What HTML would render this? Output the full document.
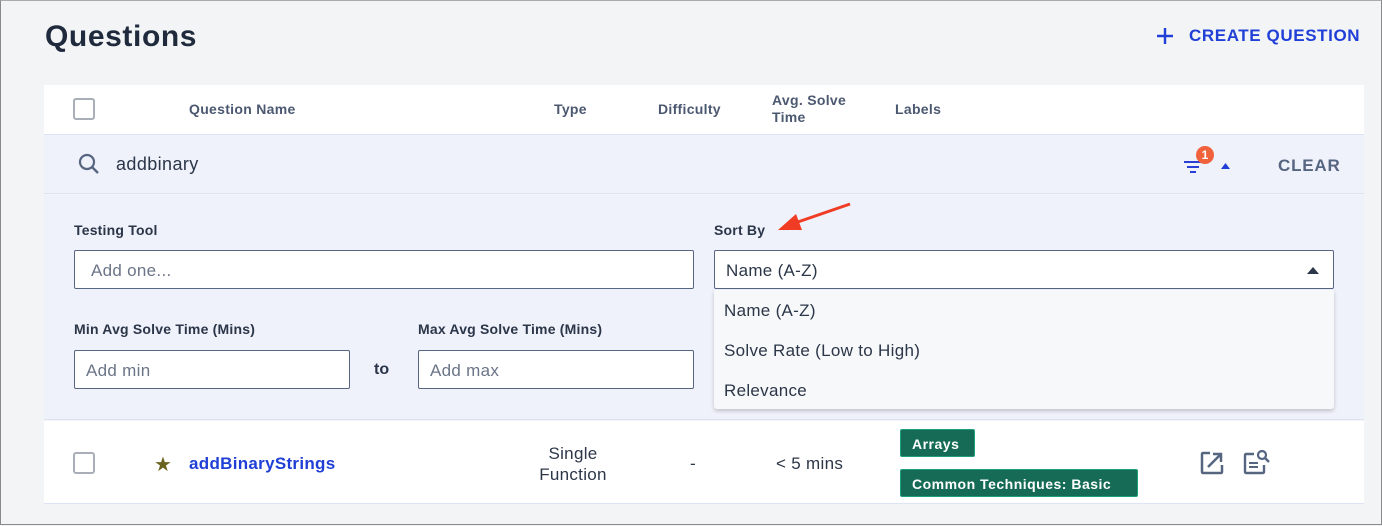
<!DOCTYPE html>
<html><head><meta charset="utf-8"><style>
*{box-sizing:border-box;margin:0;padding:0}
body{width:1382px;height:526px;background:#f3f4f6;font-family:"Liberation Sans",sans-serif;color:#2b3648;position:relative;overflow:hidden}
.frame{position:absolute;left:0;top:0;width:1382px;height:525px;border:1px solid #8a8a8a;border-top:1px solid #aaa}
.abs{position:absolute}
h1{position:absolute;left:45px;top:20px;font-size:30px;font-weight:bold;color:#1f2a3d;letter-spacing:0.6px}
.create{left:1155px;top:26px;color:#1f3fd6;font-weight:bold;font-size:17px;display:flex;align-items:center;gap:14px;letter-spacing:0.6px}
.hdr{left:44px;top:85px;width:1320px;height:50px;background:#fff;border-bottom:1px solid #dde3f3}
.th{position:absolute;font-size:14px;font-weight:bold;color:#4b5870;letter-spacing:0.3px}
.cb{position:absolute;width:22px;height:22px;border:2px solid #a9afb8;border-radius:3px;background:#fff}
.srch{left:44px;top:135px;width:1320px;height:59px;background:#eff1fb;border-bottom:1px solid #dde3f3}
.panel{left:44px;top:195px;width:1320px;height:225px;background:#eff1fb;border-bottom:1px solid #dde3f3}
.lbl{position:absolute;font-size:14px;font-weight:bold;color:#2b3648;letter-spacing:0.2px}
.inp{position:absolute;height:39px;background:#fff;border:1px solid #566580;border-radius:2px;font-size:17px;color:#6b7588;padding:10px 0 0 16px;letter-spacing:0.3px}
.row{left:44px;top:421px;width:1320px;height:83px;background:#fff;border-bottom:1px solid #dde3f3}
.tag{position:absolute;background:#156b55;border:1px solid #1fa07c;color:#fff;font-weight:bold;font-size:14px;border-radius:2px;height:28px;padding:6px 11px 0;letter-spacing:0.5px}
.dd{left:714px;top:290px;width:620px;height:119px;background:#f7f8f9;box-shadow:0 2px 4px rgba(0,0,0,.2);border-radius:0 0 3px 3px;font-size:17px;color:#2b3648;letter-spacing:0.3px}
.dd div{position:absolute;left:10px}
</style></head><body>
<h1>Questions</h1>
<div class="abs create"><svg width="20" height="20" viewBox="0 0 20 20"><path d="M10 2v16M2 10h16" stroke="#1f3fd6" stroke-width="2.4"/></svg>CREATE QUESTION</div>

<div class="abs hdr">
 <div class="cb" style="left:29px;top:13px"></div>
 <div class="th" style="left:145px;top:16px">Question Name</div>
 <div class="th" style="left:510px;top:16px">Type</div>
 <div class="th" style="left:614px;top:16px">Difficulty</div>
 <div class="th" style="left:728px;top:7px;line-height:17px">Avg. Solve<br>Time</div>
 <div class="th" style="left:851px;top:16px">Labels</div>
</div>

<div class="abs srch">
 <svg class="abs" style="left:33px;top:17px" width="24" height="24" viewBox="0 0 24 24"><circle cx="10" cy="10" r="7" fill="none" stroke="#566580" stroke-width="2.2"/><path d="M15 15l6 6" stroke="#566580" stroke-width="2.4"/></svg>
 <div class="abs" style="left:72px;top:19px;font-size:18px;color:#2b3648;letter-spacing:0.4px">addbinary</div>
 <svg class="abs" style="left:1138px;top:20px" width="50" height="24" viewBox="0 0 50 24"><path d="M2 7h18M5 12h12M8 17h6" stroke="#2a3fd6" stroke-width="2"/><path d="M39 14h9l-4.5 -6z" fill="#1f3fd6"/></svg>
 <div class="abs" style="left:1152px;top:11px;width:18px;height:18px;border-radius:50%;background:#f0623c;color:#fff;font-size:12px;font-weight:bold;text-align:center;line-height:18px">1</div>
 <div class="abs" style="left:1234px;top:21px;font-size:17px;font-weight:bold;color:#566580;letter-spacing:0.8px">CLEAR</div>
</div>

<div class="abs panel">
 <div class="lbl" style="left:30px;top:27px">Testing Tool</div>
 <div class="inp" style="left:30px;top:55px;width:620px">Add one...</div>
 <div class="lbl" style="left:670px;top:27px">Sort By</div>
 <div class="inp" style="left:670px;top:55px;width:620px;color:#2b3648;padding-left:11px">Name (A-Z)<svg class="abs" style="left:592px;top:16px" width="12" height="8"><path d="M0 7h12L6 0z" fill="#2b3648"/></svg></div>
 <div class="lbl" style="left:30px;top:126px">Min Avg Solve Time (Mins)</div>
 <div class="lbl" style="left:374px;top:126px">Max Avg Solve Time (Mins)</div>
 <div class="inp" style="left:30px;top:155px;width:276px;padding-left:11px">Add min</div>
 <div class="abs" style="left:330px;top:166px;font-weight:bold;font-size:16px">to</div>
 <div class="inp" style="left:374px;top:155px;width:276px;padding-left:11px">Add max</div>
</div>

<div class="abs dd">
 <div style="top:11px">Name (A-Z)</div>
 <div style="top:51px">Solve Rate (Low to High)</div>
 <div style="top:91px">Relevance</div>
</div>

<svg class="abs" style="left:774px;top:200px" width="80" height="40" viewBox="0 0 80 40"><path d="M76 4L18 24" stroke="#f03c24" stroke-width="3"/><path d="M4 30L22 14L28 30z" fill="#f03c24"/></svg>

<div class="abs row">
 <div class="cb" style="left:29px;top:31px"></div>
 <div class="abs" style="left:110px;top:31px;color:#6b6420;font-size:20px">★</div>
 <div class="abs" style="left:145px;top:33px;color:#1f3fd6;font-weight:bold;font-size:17px;letter-spacing:0.3px">addBinaryStrings</div>
 <div class="abs" style="left:475px;top:22px;width:108px;text-align:center;font-size:17px;line-height:21px;letter-spacing:0.3px">Single<br>Function</div>
 <div class="abs" style="left:646px;top:33px;font-size:17px">-</div>
 <div class="abs" style="left:732px;top:33px;font-size:17px;letter-spacing:0.3px">&lt; 5 mins</div>
 <div class="tag" style="left:856px;top:8px;width:75px">Arrays</div>
 <div class="tag" style="left:856px;top:48px;width:238px">Common Techniques: Basic</div>
 <svg class="abs" style="left:1155px;top:29px" width="26" height="26" viewBox="0 0 26 26"><path d="M11 3H4a1 1 0 0 0-1 1v18a1 1 0 0 0 1 1h18a1 1 0 0 0 1-1v-7" fill="none" stroke="#566580" stroke-width="2.5"/><path d="M9 17L21 5M14 4h8v8" fill="none" stroke="#566580" stroke-width="2.5"/></svg>
 <svg class="abs" style="left:1198px;top:27px" width="30" height="28" viewBox="0 0 30 28"><path d="M12 6H4a1 1 0 0 0-1 1v17a1 1 0 0 0 1 1h17a1 1 0 0 0 1-1v-7" fill="none" stroke="#566580" stroke-width="2.4"/><path d="M7 15h9M7 19h9" stroke="#566580" stroke-width="2"/><circle cx="20" cy="7" r="4" fill="none" stroke="#566580" stroke-width="2.2"/><path d="M23 10l4 4" stroke="#566580" stroke-width="2.4"/></svg>
</div>
<div class="frame"></div>
</body></html>
